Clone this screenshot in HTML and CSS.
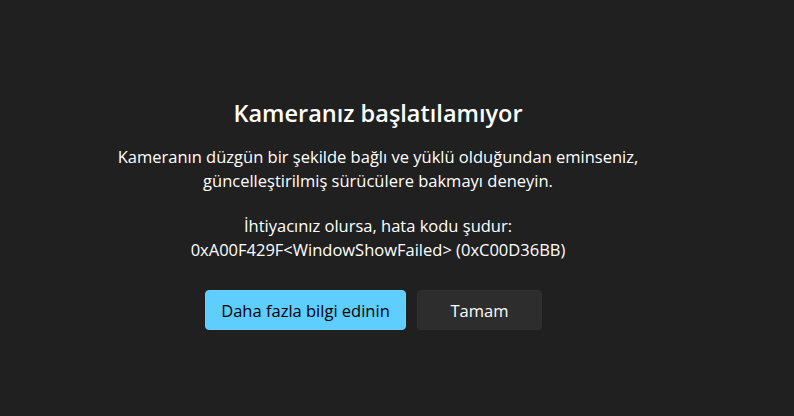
FILE: index.html
```html
<!DOCTYPE html>
<html lang="tr">
<head>
  <meta charset="UTF-8">
  <title>Kamera</title>
  <link rel="stylesheet" href="styles.css">
</head>
<body>
  <div class="dialog">
    <h1>Kameranız başlatılamıyor</h1>
    <p>Kameranın düzgün bir şekilde bağlı ve yüklü olduğundan eminseniz,<br>güncelleştirilmiş sürücülere bakmayı deneyin.</p>
    <p>İhtiyacınız olursa, hata kodu şudur:<br>0xA00F429F&lt;WindowShowFailed&gt; (0xC00D36BB)</p>
    <div class="actions">
      <button class="btn primary">Daha fazla bilgi edinin</button>
      <button class="btn secondary">Tamam</button>
    </div>
  </div>
</body>
</html>
```

FILE: styles.css
```css
* {
  margin: 0;
  padding: 0;
  box-sizing: border-box;
}
body {
  font-family: "Open Sans", "Noto Sans", sans-serif;
  background-color: #202020;
  color: #ffffff;
  height: 100vh;
  display: flex;
  justify-content: center;
  padding: 97px 38px 0 0;
}
.dialog {
  display: flex;
  flex-direction: column;
  align-items: center;
  text-align: center;
}
h1 {
  font-size: 23.5px;
  font-weight: 600;
  line-height: 32px;
  margin-bottom: 16px;
}
p {
  font-size: 16.5px;
  line-height: 24px;
  margin-bottom: 21px;
}
.actions {
  display: flex;
  gap: 11px;
  margin: 7px 9px 0 0;
}
.btn {
  font-family: inherit;
  font-size: 16.5px;
  height: 40px;
  border-radius: 4px;
  border: 1px solid transparent;
}
.primary {
  width: 201px;
  background-color: #60cdff;
  color: #000000;
  border-color: #6ad1ff;
}
.secondary {
  width: 125px;
  background-color: #2d2d2d;
  color: #ffffff;
  border-color: #303030;
}
```
